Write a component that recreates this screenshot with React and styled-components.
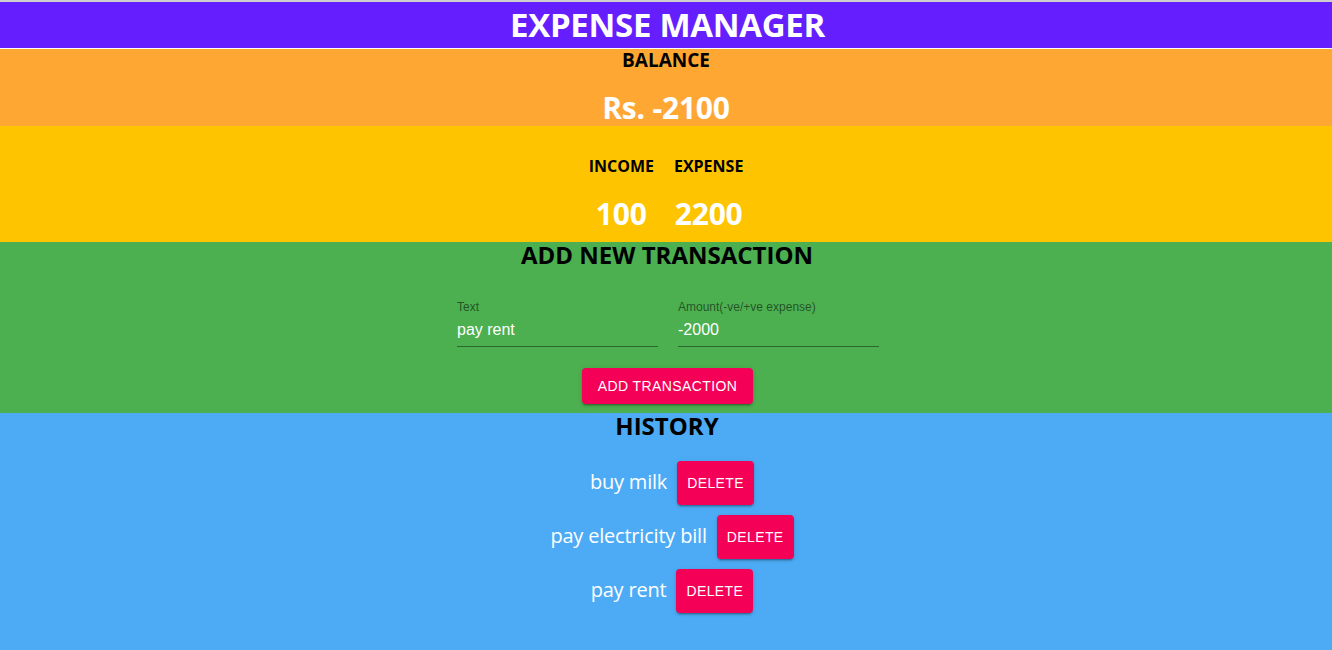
import React from 'react';
import styled, { createGlobalStyle } from 'styled-components';

const GlobalStyle = createGlobalStyle`
	html, body {
		margin: 0;
		padding: 0;
	}
	body {
		border-top: 2px solid #cfcfcf;
		background: #4dabf5;
		font-family: "Open Sans", "Noto Sans", sans-serif;
	}
`

const Page = styled.div`
	display: flex;
	flex-direction: column;
	min-height: 648px;
`

const Header = styled.header`
	background: #651fff;
	height: 46px;
	border-bottom: 1px solid #ffffff;
	display: flex;
	align-items: center;
	justify-content: center;
`

const AppTitle = styled.h1`
	margin: 0;
	color: #ffffff;
	font-size: 33px;
	font-weight: 700;
	line-height: 46px;
	letter-spacing: -0.3px;
	padding-left: 3px;
`

const Band = styled.section`
	background: ${props => props.color};
	display: flex;
	flex-direction: column;
	align-items: center;
	padding: ${props => props.pad || '0'};
	flex: ${props => props.grow ? 1 : 'none'};
`

const StatRow = styled.div`
	display: flex;
	justify-content: center;
	gap: 20px;
`

const Stat = styled.div`
	display: flex;
	flex-direction: column;
	align-items: center;
`

const StatLabel = styled.h6`
	margin: 0;
	font-size: ${props => props.big ? '19px' : '16px'};
	font-weight: 700;
	line-height: 22px;
	color: #000000;
`

const StatValue = styled.h4`
	margin: 19px 0 0;
	font-size: 30px;
	font-weight: 700;
	line-height: 36px;
	color: #ffffff;
	letter-spacing: -0.2px;
`

const SectionTitle = styled.h5`
	margin: 0;
	font-size: 24px;
	font-weight: 700;
	line-height: 26px;
	color: #000000;
	padding-left: 2px;
`

const Form = styled.form`
	display: flex;
	flex-direction: column;
	align-items: center;
	margin-top: 32px;
	padding-left: 3px;
`

const Fields = styled.div`
	display: flex;
	gap: 20px;
	padding-left: 1px;
`

const Field = styled.label`
	display: flex;
	flex-direction: column;
	width: 201px;
	font-family: "Liberation Sans", Arial, sans-serif;
`

const FieldLabel = styled.span`
	font-size: 12px;
	line-height: 14px;
	color: rgba(0, 0, 0, 0.54);
`

const Input = styled.input`
	margin: 0;
	padding: 6px 0 7px;
	border: none;
	border-bottom: 1px solid rgba(0, 0, 0, 0.42);
	background: transparent;
	font-family: inherit;
	font-size: 16px;
	line-height: 19px;
	height: 19px;
	color: #ffffff;
	outline: none;
	box-sizing: content-box;
`

const Button = styled.button`
	background: #f50057;
	color: #ffffff;
	border: none;
	border-radius: 4px;
	font-family: "Liberation Sans", Arial, sans-serif;
	font-size: 14px;
	letter-spacing: 0.4px;
	text-transform: uppercase;
	line-height: 24px;
	padding: ${props => props.tall ? '10px 10px' : '6px 16px'};
	margin-top: ${props => props.tall ? '0' : '21px'};
	box-shadow: 0 3px 1px -2px rgba(0,0,0,0.2), 0 2px 2px 0 rgba(0,0,0,0.14), 0 1px 5px 0 rgba(0,0,0,0.12);
	cursor: pointer;
`

const HistoryList = styled.ul`
	list-style: none;
	margin: 17px 0 0;
	padding: 0;
	display: flex;
	flex-direction: column;
	align-items: center;
`

const HistoryItem = styled.li`
	display: flex;
	align-items: center;
	gap: 10px;
	margin: 5px 0;
	padding-left: 12px;
`

const ItemText = styled.span`
	font-size: 20px;
	line-height: 26px;
	padding-bottom: 2px;
	color: #ffffff;
	letter-spacing: -0.2px;
`

const history = ['buy milk', 'pay electricity bill', 'pay rent'];

export default function App() {
	return (
		<Page>
			<GlobalStyle />
			<Header>
				<AppTitle>EXPENSE MANAGER</AppTitle>
			</Header>
			<Band color="#ffa733">
				<Stat>
					<StatLabel big>BALANCE</StatLabel>
					<StatValue>Rs. -2100</StatValue>
				</Stat>
			</Band>
			<Band color="#ffc400" pad="29px 0 10px">
				<StatRow>
					<Stat>
						<StatLabel>INCOME</StatLabel>
						<StatValue>100</StatValue>
					</Stat>
					<Stat>
						<StatLabel>EXPENSE</StatLabel>
						<StatValue>2200</StatValue>
					</Stat>
				</StatRow>
			</Band>
			<Band color="#4caf50" pad="0 0 9px">
				<SectionTitle>ADD NEW TRANSACTION</SectionTitle>
				<Form onSubmit={e => e.preventDefault()}>
					<Fields>
						<Field>
							<FieldLabel>Text</FieldLabel>
							<Input defaultValue="pay rent" />
						</Field>
						<Field>
							<FieldLabel>Amount(-ve/+ve expense)</FieldLabel>
							<Input defaultValue="-2000" />
						</Field>
					</Fields>
					<Button type="submit">Add transaction</Button>
				</Form>
			</Band>
			<Band color="#4dabf5" grow>
				<SectionTitle>HISTORY</SectionTitle>
				<HistoryList>
					{history.map(item => (
						<HistoryItem key={item}>
							<ItemText>{item}</ItemText>
							<Button tall type="button">Delete</Button>
						</HistoryItem>
					))}
				</HistoryList>
			</Band>
		</Page>
	);
}
